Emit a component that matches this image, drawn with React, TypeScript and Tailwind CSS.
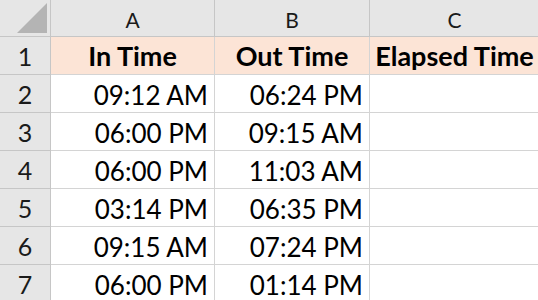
const COLS = ["A", "B", "C"];

const ROWS = [
  ["09:12 AM", "06:24 PM"],
  ["06:00 PM", "09:15 AM"],
  ["06:00 PM", "11:03 AM"],
  ["03:14 PM", "06:35 PM"],
  ["09:15 AM", "07:24 PM"],
  ["06:00 PM", "01:14 PM"],
];

const colWidths = ["w-[164px]", "w-[155px]", "w-[170px]"];

function RowHead({ n }: { n: number }) {
  return (
    <div className="flex h-full w-[51px] shrink-0 items-center justify-center border-b border-r border-[#c6c6c6] bg-[#e6e6e6] pt-[2px] text-[25px] text-[#1a1a1a]">
      {n}
    </div>
  );
}

export default function App() {
  return (
    <div
      className="h-[300px] w-[538px] overflow-hidden bg-white"
      style={{ fontFamily: "Lato, 'Liberation Sans', sans-serif" }}
    >
      {/* column letters */}
      <div className="flex h-[37px]">
        <div className="flex w-[51px] shrink-0 items-end justify-end border-b border-r border-[#c6c6c6] bg-[#e6e6e6] pb-[3px] pr-[3px]">
          <svg width="30" height="30" viewBox="0 0 30 30">
            <polygon points="0,30 30,30 30,0" fill="#b4b4b4" />
          </svg>
        </div>
        {COLS.map((c, i) => (
          <div
            key={c}
            className={`${colWidths[i]} flex shrink-0 items-center justify-center border-b border-r border-[#c6c6c6] bg-[#e6e6e6] pt-[3px] text-[21px] text-[#1a1a1a]`}
          >
            {c}
          </div>
        ))}
      </div>

      {/* header row */}
      <div className="flex h-[38px]">
        <RowHead n={1} />
        {["In Time", "Out Time", "Elapsed Time"].map((t, i) => (
          <div
            key={t}
            className={`${colWidths[i]} flex shrink-0 items-center justify-center border-b border-r border-[#d4d4d4] bg-[#fce4d6] pt-[2px] text-[27px] font-bold text-black`}
          >
            {t}
          </div>
        ))}
      </div>

      {ROWS.map((r, ri) => (
        <div key={ri} className="flex h-[38px]">
          <RowHead n={ri + 2} />
          {[r[0], r[1], ""].map((v, i) => (
            <div
              key={i}
              className={`${colWidths[i]} flex shrink-0 items-center justify-end border-b border-r border-[#d4d4d4] pr-[6px] pt-[3px] text-[26px] text-black`}
            >
              {v}
            </div>
          ))}
        </div>
      ))}
    </div>
  );
}
